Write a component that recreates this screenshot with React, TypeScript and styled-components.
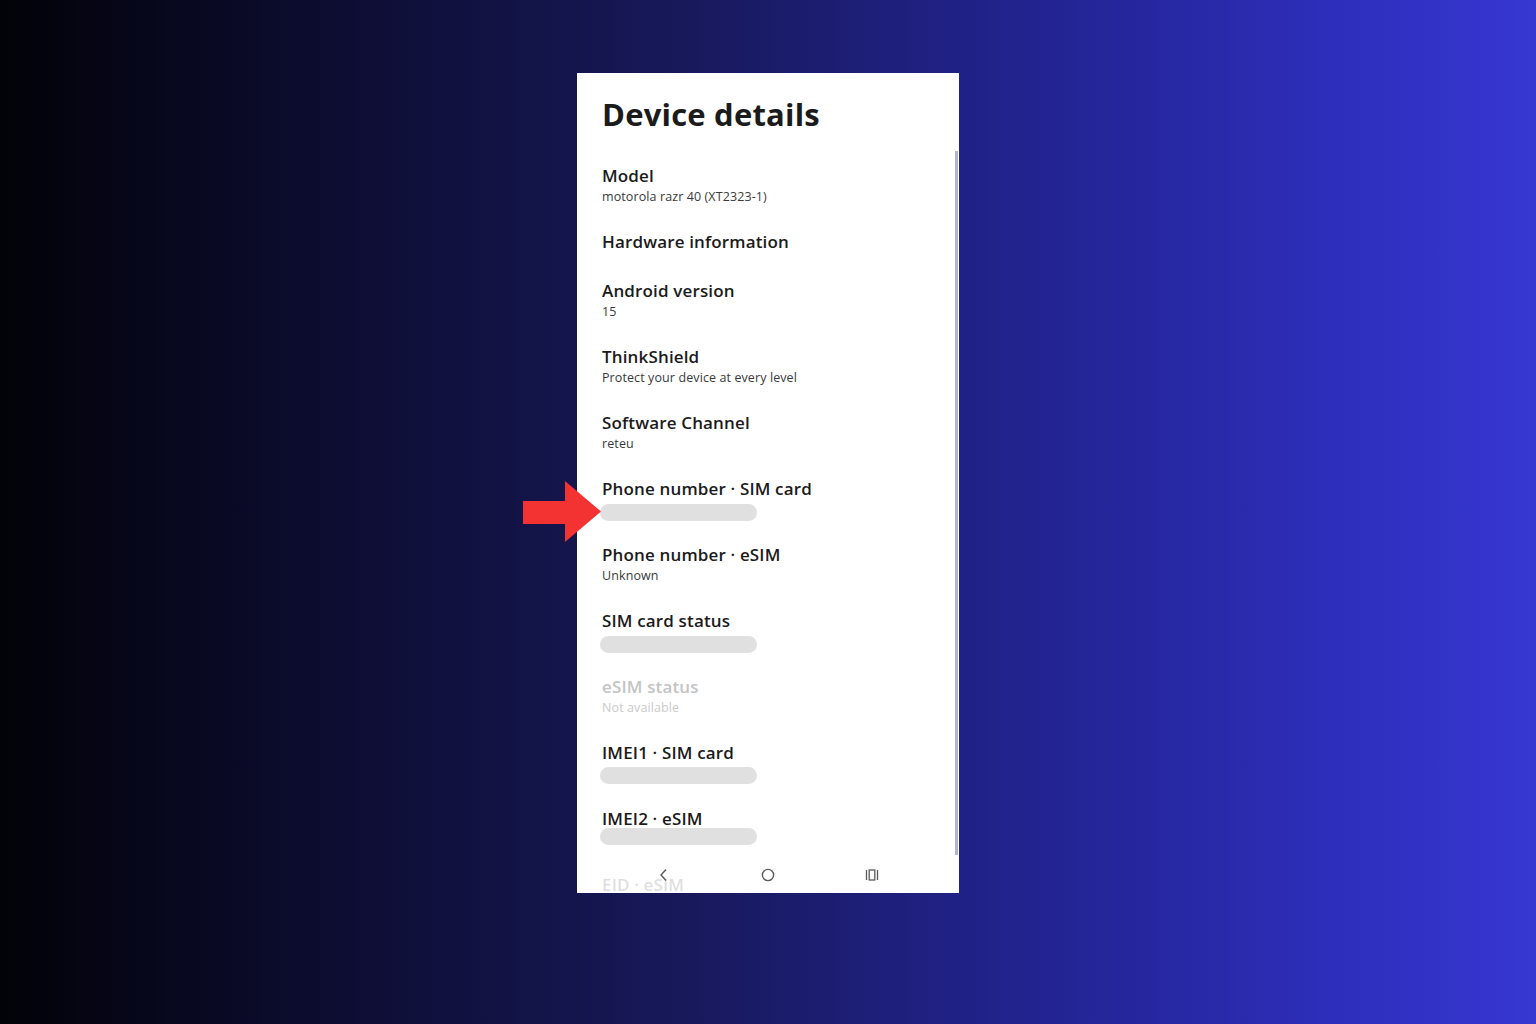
import React from "react";
import styled, { createGlobalStyle } from "styled-components";

const GlobalStyle = createGlobalStyle`
  html, body {
    margin: 0;
    padding: 0;
  }
  body {
    width: 1536px;
    height: 1024px;
    overflow: hidden;
    background: linear-gradient(90deg, #020208 0%, #07071c 10%, #0d0d33 22%, #131448 35%, #18195c 45%, #1f2080 60%, #2627a0 75%, #2e2fbd 88%, #3737d2 100%);
    font-family: "Open Sans", "Noto Sans", "Liberation Sans", sans-serif;
  }
`;

const Page = styled.div`
  display: flex;
  justify-content: center;
  padding-top: 73px;
  height: 1024px;
  box-sizing: border-box;
`;

const Stage = styled.div`
  position: relative;
`;

const Phone = styled.div`
  position: relative;
  width: 382px;
  height: 820px;
  background: #ffffff;
  overflow: hidden;
`;

const Header = styled.h1`
  margin: 0;
  padding: 23px 25px 20px;
  height: 36px;
  font-size: 31px;
  line-height: 36px;
  font-weight: 700;
  color: #1b1b1b;
  letter-spacing: 0.2px;
`;

const List = styled.div`
  display: flex;
  flex-direction: column;
`;

const Item = styled.div<{ $disabled?: boolean }>`
  padding: 12px 25px 13px;
  display: flex;
  flex-direction: column;
  color: ${(p) => (p.$disabled ? "#c4c4c4" : "#1b1b1b")};
`;

const Title = styled.div`
  font-size: 17px;
  line-height: 24px;
  font-weight: 600;
  letter-spacing: 0.15px;
`;

const Sub = styled.div<{ $disabled?: boolean }>`
  font-size: 12.5px;
  line-height: 17px;
  color: ${(p) => (p.$disabled ? "#cacaca" : "#3a3a3a")};
  letter-spacing: 0.1px;
`;

const Skeleton = styled.div<{ $gap: number }>`
  margin-top: ${(p) => p.$gap}px;
  margin-bottom: ${(p) => -p.$gap}px;
  margin-left: -2px;
  width: 157px;
  height: 17px;
  border-radius: 9px;
  background: #e0e0e0;
`;

const Scrollbar = styled.div`
  position: absolute;
  right: 1px;
  top: 78px;
  width: 3px;
  height: 704px;
  background: #b4b4c4;
`;

const NavBar = styled.div`
  position: absolute;
  left: 0;
  right: 0;
  bottom: 0;
  height: 36px;
  display: flex;
  justify-content: center;
  align-items: center;
  background: rgba(255, 255, 255, 0.86);
`;

const NavSlot = styled.div`
  width: 104px;
  display: flex;
  justify-content: center;
  align-items: center;
  color: #5a5a5a;
`;

const Arrow = styled.svg`
  position: absolute;
  left: -54px;
  top: 407px;
`;

type Row = {
  title: string;
  sub?: string;
  skeleton?: boolean;
  gap?: number;
  disabled?: boolean;
};

const rows: Row[] = [
  { title: "Model", sub: "motorola razr 40 (XT2323-1)" },
  { title: "Hardware information" },
  { title: "Android version", sub: "15" },
  { title: "ThinkShield", sub: "Protect your device at every level" },
  { title: "Software Channel", sub: "reteu" },
  { title: "Phone number · SIM card", skeleton: true, gap: 3 },
  { title: "Phone number · eSIM", sub: "Unknown" },
  { title: "SIM card status", skeleton: true, gap: 3 },
  { title: "eSIM status", sub: "Not available", disabled: true },
  { title: "IMEI1 · SIM card", skeleton: true, gap: 2 },
  { title: "IMEI2 · eSIM", skeleton: true, gap: -3 },
  { title: "EID · eSIM", sub: "" },
];

export default function App() {
  return (
    <>
      <GlobalStyle />
      <Page>
        <Stage>
          <Phone>
            <Header>Device details</Header>
            <List>
              {rows.map((r) => (
                <Item key={r.title} $disabled={r.disabled}>
                  <Title>{r.title}</Title>
                  {r.sub !== undefined && <Sub $disabled={r.disabled}>{r.sub}</Sub>}
                  {r.skeleton && <Skeleton $gap={r.gap ?? 3} />}
                </Item>
              ))}
            </List>
            <Scrollbar />
            <NavBar>
              <NavSlot>
                <svg width="12" height="14" viewBox="0 0 12 14">
                  <path d="M8 1.5 L3 7 L8 12.5" fill="none" stroke="currentColor" strokeWidth="1.4" />
                </svg>
              </NavSlot>
              <NavSlot>
                <svg width="14" height="14" viewBox="0 0 14 14">
                  <circle cx="7" cy="7" r="5.6" fill="none" stroke="currentColor" strokeWidth="1.4" />
                </svg>
              </NavSlot>
              <NavSlot>
                <svg width="14" height="14" viewBox="0 0 14 14">
                  <path d="M1.5 2 V12 M12.5 2 V12" stroke="currentColor" strokeWidth="1.3" />
                  <rect x="4.2" y="2" width="5.6" height="10" fill="none" stroke="currentColor" strokeWidth="1.3" />
                </svg>
              </NavSlot>
            </NavBar>
          </Phone>
          <Arrow width="80" height="64" viewBox="0 0 80 64">
            <rect x="0" y="21" width="50" height="23" fill="#f23331" />
            <polygon points="42,1 78,31.5 42,62" fill="#f23331" />
          </Arrow>
        </Stage>
      </Page>
    </>
  );
}
